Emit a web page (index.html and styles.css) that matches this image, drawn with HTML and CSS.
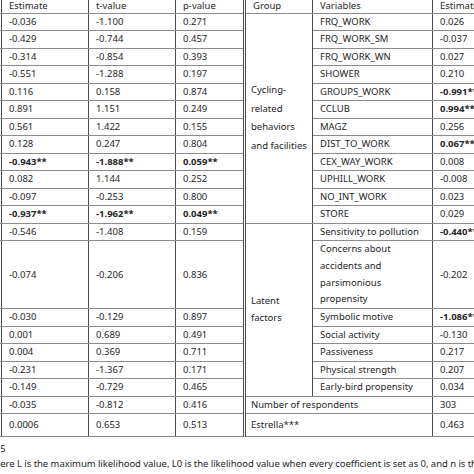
FILE: index.html
```html
<!DOCTYPE html>
<html>
<head>
<meta charset="utf-8">
<link rel="stylesheet" href="styles.css">
</head>
<body>
<div class="page">
<table class="res">
<colgroup>
<col class="c0"><col class="c-est"><col class="c-t"><col class="c-p"><col class="c-grp"><col class="c-var"><col class="c-est2">
</colgroup>
<tr class="head"><td></td><td>Estimate</td><td>t-value</td><td class="mid">p-value</td><td>Group</td><td>Variables</td><td>Estimate</td></tr>
<tr><td></td><td>-0.036</td><td>-1.100</td><td class="mid">0.271</td><td class="grp" rowspan="12">Cycling-related behaviors and facilities</td><td>FRQ_WORK</td><td>0.026</td></tr>
<tr><td></td><td>-0.429</td><td>-0.744</td><td class="mid">0.457</td><td>FRQ_WORK_SM</td><td>-0.037</td></tr>
<tr><td></td><td>-0.314</td><td>-0.854</td><td class="mid">0.393</td><td>FRQ_WORK_WN</td><td>0.027</td></tr>
<tr><td></td><td>-0.551</td><td>-1.288</td><td class="mid">0.197</td><td>SHOWER</td><td>0.210</td></tr>
<tr><td></td><td>0.116</td><td>0.158</td><td class="mid">0.874</td><td>GROUPS_WORK</td><td class="b">-0.991**</td></tr>
<tr><td></td><td>0.891</td><td>1.151</td><td class="mid">0.249</td><td>CCLUB</td><td class="b">0.994**</td></tr>
<tr><td></td><td>0.561</td><td>1.422</td><td class="mid">0.155</td><td>MAGZ</td><td>0.256</td></tr>
<tr><td></td><td>0.128</td><td>0.247</td><td class="mid">0.804</td><td>DIST_TO_WORK</td><td class="b">0.067**</td></tr>
<tr><td></td><td class="b">-0.943**</td><td class="b">-1.888**</td><td class="mid b">0.059**</td><td>CEX_WAY_WORK</td><td>0.008</td></tr>
<tr><td></td><td>0.082</td><td>1.144</td><td class="mid">0.252</td><td>UPHILL_WORK</td><td>-0.008</td></tr>
<tr><td></td><td>-0.097</td><td>-0.253</td><td class="mid">0.800</td><td>NO_INT_WORK</td><td>0.023</td></tr>
<tr><td></td><td class="b">-0.937**</td><td class="b">-1.962**</td><td class="mid b">0.049**</td><td>STORE</td><td>0.029</td></tr>
<tr><td></td><td>-0.546</td><td>-1.408</td><td class="mid">0.159</td><td class="grp grp2" rowspan="7">Latent factors</td><td>Sensitivity to pollution</td><td class="b">-0.440**</td></tr>
<tr class="tall"><td></td><td>-0.074</td><td>-0.206</td><td class="mid">0.836</td><td class="wrap">Concerns about accidents and parsimonious propensity</td><td>-0.202</td></tr>
<tr><td></td><td>-0.030</td><td>-0.129</td><td class="mid">0.897</td><td>Symbolic motive</td><td class="b">-1.086**</td></tr>
<tr><td></td><td>0.001</td><td>0.689</td><td class="mid">0.491</td><td>Social activity</td><td>-0.130</td></tr>
<tr><td></td><td>0.004</td><td>0.369</td><td class="mid">0.711</td><td>Passiveness</td><td>0.217</td></tr>
<tr><td></td><td>-0.231</td><td>-1.367</td><td class="mid">0.171</td><td>Physical strength</td><td>0.207</td></tr>
<tr><td></td><td>-0.149</td><td>-0.729</td><td class="mid">0.465</td><td>Early-bird propensity</td><td>0.034</td></tr>
<tr><td></td><td>-0.035</td><td>-0.812</td><td class="mid">0.416</td><td colspan="2">Number of respondents</td><td>303</td></tr>
<tr class="last"><td></td><td>0.0006</td><td>0.653</td><td class="mid">0.513</td><td colspan="2">Estrella***</td><td>0.463</td></tr>
</table>
<div class="note1">** p &lt; 0.05</div>
<div class="note2">where L is the maximum likelihood value, L0 is the likelihood value when every coefficient is set as 0, and n is the number of observations</div>
</div>
</body>
</html>
```

FILE: styles.css
```css
html, body {
  margin: 0;
  padding: 0;
  background: #fff;
}
.page {
  width: 474px;
  height: 474px;
  overflow: hidden;
  font-family: "Noto Sans", "DejaVu Sans", sans-serif;
  font-size: 9.5px;
  color: #262626;
}
.res {
  border-collapse: collapse;
  table-layout: fixed;
  width: 580px;
  margin-left: -60px;
  margin-top: 0;
}
.c0 { width: 61px; }
.c-est { width: 87px; }
.c-t { width: 87px; }
.c-p { width: 69px; }
.c-grp { width: 68px; }
.c-var { width: 120px; }
.c-est2 { width: 88px; }
.res td {
  height: 16.5px;
  padding: 0 3px 0 7px;
  line-height: 12px;
  border-top: 1px solid #8c8c8c;
  border-bottom: 1px solid #8c8c8c;
  border-left: 1px solid #4a4a4a;
  border-right: 1px solid #4a4a4a;
  white-space: nowrap;
  vertical-align: middle;
  text-align: left;
}
.res .head td {
  border-top: 0;
  height: 11.5px;
  line-height: 10px;
  padding-bottom: 1px;
}
.res td.mid {
  border-right: 3px double #4a4a4a;
}
.res td.grp {
  white-space: normal;
  padding: 0 2px 0 5px;
  line-height: 18.5px;
}
.res td.grp2 {
  line-height: 16.5px;
}
.res td.wrap {
  white-space: normal;
  line-height: 16.75px;
  padding-right: 20px;
}
.res .tall td {
  height: 66px;
}
.res .last td {
  height: 21.5px;
}
.res td[colspan] {
  padding-left: 5px;
}
.b {
  font-weight: bold;
}
.note1 {
  width: 66px;
  margin-left: -60px;
  margin-top: 5px;
  text-align: right;
  line-height: 14px;
  white-space: nowrap;
  letter-spacing: 0.3px;
}
.note2 {
  margin-left: -13px;
  margin-top: 1px;
  line-height: 14px;
  white-space: nowrap;
  letter-spacing: -0.05px;
}
```
